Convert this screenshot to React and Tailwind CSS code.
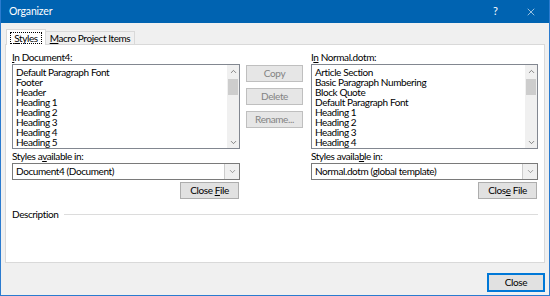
import { X, ChevronUp, ChevronDown } from "lucide-react";

const leftItems = [
  "Default Paragraph Font",
  "Footer",
  "Header",
  "Heading 1",
  "Heading 2",
  "Heading 3",
  "Heading 4",
  "Heading 5",
];

const rightItems = [
  "Article Section",
  "Basic Paragraph Numbering",
  "Block Quote",
  "Default Paragraph Font",
  "Heading 1",
  "Heading 2",
  "Heading 3",
  "Heading 4",
];

function ListBox({ items }) {
  return (
    <div className="flex h-[85px] border border-[#828790] bg-white">
      <div className="flex-1 pl-[3px] pt-[2px]">
        {items.map((t) => (
          <div key={t} className="h-[10px] leading-[10px] whitespace-nowrap">
            {t}
          </div>
        ))}
      </div>
      <div className="flex w-[12px] flex-col bg-[#f0f0f0]">
        <div className="flex h-[12px] items-center justify-center text-[#606060]">
          <ChevronUp size={9} strokeWidth={2} />
        </div>
        <div className="mx-[1px] mt-[2px] h-[16px] bg-[#cdcdcd]" />
        <div className="flex-1" />
        <div className="flex h-[12px] items-center justify-center text-[#606060]">
          <ChevronDown size={9} strokeWidth={2} />
        </div>
      </div>
    </div>
  );
}

function Combo({ value }) {
  return (
    <div className="flex h-[17px] border border-[#7a7a7a] bg-white">
      <div className="flex-1 pl-[3px] leading-[15px] whitespace-nowrap">{value}</div>
      <div className="flex w-[15px] items-center justify-center border-l border-[#cccccc] bg-[#f0f0f0] text-[#606060]">
        <ChevronDown size={9} strokeWidth={1.5} />
      </div>
    </div>
  );
}

function Btn({ children, disabled, className = "" }) {
  return (
    <div
      className={
        "flex h-[17px] items-center justify-center border " +
        (disabled
          ? "border-[#bfbfbf] bg-[#e6e6e6] text-[#838383] "
          : "border-[#adadad] bg-[#e1e1e1] text-black ") +
        className
      }
    >
      {children}
    </div>
  );
}

export default function App() {
  return (
    <div className="flex h-[296px] w-[550px] flex-col border-x border-b border-[#2b7bcf] bg-[#f0f0f0] font-['Lato',sans-serif] text-[10px] tracking-[-0.4px] text-black">
      <div className="flex h-[23px] items-center bg-[#0063b1] pl-[8px] text-white">
        <span className="text-[10.5px] tracking-[-0.2px]">Organizer</span>
        <div className="flex-1" />
        <span className="w-[32px] text-[11px]">?</span>
        <X size={12} strokeWidth={1.2} className="mr-[12px]" />
      </div>

      <div className="relative z-10 -mb-px flex h-[22px] items-end pl-[5px]">
        <div className="flex h-[16px] w-[40px] items-center justify-center border-x border-t border-[#d9d9d9] bg-white">
          <span className="border border-dotted border-black px-[3px] leading-[10px]">
            <u>S</u>tyles
          </span>
        </div>
        <div className="flex h-[14px] w-[89px] items-center justify-center whitespace-nowrap border-r border-t border-b border-[#d9d9d9] bg-[#f0f0f0]">
          <span>
            <u>M</u>acro Project Items
          </span>
        </div>
      </div>

      <div className="mx-[4px] flex h-[219px] flex-col border border-[#d9d9d9] bg-white px-[6px] pt-[5px]">
        <div className="flex">
          <div className="flex w-[228px] flex-col">
            <div className="h-[14px] leading-[14px]">
              <u>I</u>n Document4:
            </div>
            <ListBox items={leftItems} />
            <div className="h-[14px] leading-[14px]">
              Styles a<u>v</u>ailable in:
            </div>
            <Combo value="Document4 (Document)" />
            <Btn className="mr-[1px] mt-[2px] w-[59px] self-end">
              <span>
                Close <u>F</u>ile
              </span>
            </Btn>
          </div>

          <div className="ml-[6px] flex w-[57px] flex-col gap-[6px] pt-[15px]">
            <Btn disabled>Copy</Btn>
            <Btn disabled>Delete</Btn>
            <Btn disabled>Rename...</Btn>
          </div>

          <div className="ml-[8px] flex flex-1 flex-col">
            <div className="h-[14px] leading-[14px]">
              I<u>n</u> Normal.dotm:
            </div>
            <ListBox items={rightItems} />
            <div className="h-[14px] leading-[14px]">
              Styles availa<u>b</u>le in:
            </div>
            <Combo value="Normal.dotm (global template)" />
            <Btn className="mr-[1px] mt-[2px] w-[59px] self-end">
              <span>
                Clos<u>e</u> File
              </span>
            </Btn>
          </div>
        </div>

        <div className="mt-[9px] flex h-[12px] items-center gap-[6px]">
          <span>Description</span>
          <div className="h-px flex-1 bg-[#dcdcdc]" />
        </div>
      </div>

      <div className="flex flex-1 items-start justify-end pr-[4px] pt-[10px]">
        <div className="flex h-[19px] w-[58px] items-center justify-center border-2 border-[#0078d7] bg-[#e1e1e1]">
          Close
        </div>
      </div>
    </div>
  );
}
